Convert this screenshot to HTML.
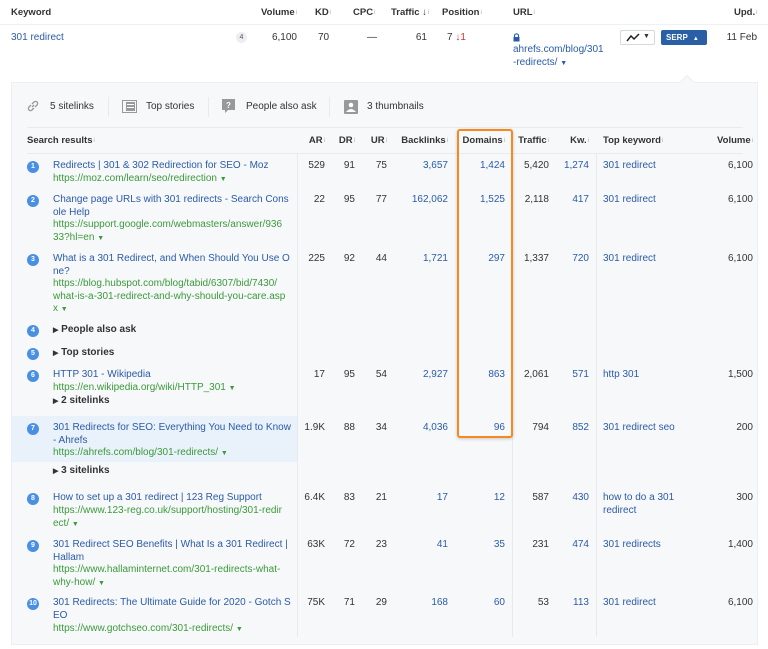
<!DOCTYPE html>
<html><head><meta charset="utf-8">
<style>
*{margin:0;padding:0;box-sizing:border-box}
body{width:768px;height:647px;background:#fff;font-family:"Liberation Sans",Arial,sans-serif;font-size:10px;color:#333;position:relative;overflow:hidden}
.a{position:absolute;white-space:nowrap;line-height:12px}
.r{text-align:right}
.b{font-weight:bold;color:#333}
.l{color:#2a5ba8}
.g{color:#3b9a3b}
.h{font-weight:bold;font-size:9.5px;color:#333}
.i{font-size:6px;color:#aaa;vertical-align:top;font-weight:normal;margin-left:1px}
.n{position:absolute;width:12px;height:12px;border-radius:50%;background:#4a90e2;color:#fff;font-size:7px;font-weight:bold;text-align:center;line-height:12px}
.vl{position:absolute;width:1px;background:#e8eaee}
.tri{font-size:7px}
#w{position:absolute;left:0;top:2px;width:768px;height:647px}
</style></head><body>
<!-- top header -->
<div class="a h" style="left:11px;top:7px">Keyword</div>
<div class="a h r" style="right:471px;top:7px">Volume<span class="i">i</span></div>
<div class="a h" style="left:315px;top:7px">KD<span class="i">i</span></div>
<div class="a h" style="left:353px;top:7px">CPC<span class="i">i</span></div>
<div class="a h" style="left:391px;top:7px">Traffic ↓<span class="i">i</span></div>
<div class="a h" style="left:442px;top:7px">Position<span class="i">i</span></div>
<div class="a h" style="left:513px;top:7px">URL<span class="i">i</span></div>
<div class="a h" style="left:734px;top:7px">Upd.<span class="i">i</span></div>
<div style="position:absolute;left:0;top:24px;width:768px;height:1px;background:#eef0f3"></div>
<div class="a l" style="left:11px;top:32px">301 redirect</div>
<div style="position:absolute;left:236px;top:32px;width:11px;height:11px;border-radius:50%;background:#eceef1;font-size:7px;color:#555;text-align:center;line-height:11px">4</div>
<div class="a r" style="right:471px;top:32px">6,100</div>
<div class="a" style="left:318px;top:32px">70</div>
<div class="a" style="left:367px;top:32px">—</div>
<div class="a r" style="right:341px;top:32px">61</div>
<div class="a" style="left:447px;top:32px">7 <span style="color:#d0342c">↓1</span></div>
<svg style="position:absolute;left:513px;top:33px" width="7" height="9"><path d="M1.5 4 V2.8 a2 2 0 0 1 4 0 V4" stroke="#2a5ba8" stroke-width="1.2" fill="none"/><rect x="0.5" y="4" width="6" height="4.5" fill="#2a5ba8"/></svg>
<div class="a l" style="left:513px;top:44px">ahrefs.com/blog/301</div>
<div class="a l" style="left:513px;top:57px">-redirects/ <span class="tri">▼</span></div>
<div style="position:absolute;left:620px;top:30px;width:35px;height:15px;border:1px solid #d5d8dd;border-radius:2px;background:#fff">
<svg width="14" height="10" style="position:absolute;left:5px;top:2px"><path d="M1 8 L5 3 L8 6 L13 1" stroke="#222" stroke-width="1.5" fill="none"/></svg>
<span style="position:absolute;left:22px;top:2px;font-size:7px">▼</span></div>
<div style="position:absolute;left:661px;top:30px;width:46px;height:15px;background:#2a5fa6;border-radius:2px;color:#fff;font-size:8px;font-weight:bold;line-height:15px;padding-left:5px">SERP <span style="font-size:6px;margin-left:3px">▲</span></div>
<div class="a r" style="right:11px;top:32px">11 Feb</div>
<!-- panel -->
<div style="position:absolute;left:11px;top:82px;width:747px;height:563px;background:#f7f8fa;border:1px solid #eceef1"></div>
<div style="position:absolute;left:682px;top:77px;width:10px;height:10px;background:#f7f8fa;border-left:1px solid #eceef1;border-top:1px solid #eceef1;transform:rotate(45deg)"></div>
<!-- features -->
<svg style="position:absolute;left:26px;top:99px" width="14" height="14"><path d="M6 8 L8 6 M5 6 L3 8 a2 2 0 0 0 3 3 L8 9 M9 8 L11 6 a2 2 0 0 0 -3 -3 L6 5" stroke="#999" stroke-width="1.3" fill="none"/></svg>
<div class="a" style="left:50px;top:101px">5 sitelinks</div>
<div class="vl" style="left:108px;top:97px;height:20px"></div>
<svg style="position:absolute;left:122px;top:100px" width="15" height="13"><rect x="0.5" y="0.5" width="14" height="12" fill="none" stroke="#999"/><rect x="4" y="2" width="9" height="9" fill="#999"/><rect x="5" y="4" width="7" height="1" fill="#fff"/><rect x="5" y="7" width="7" height="1" fill="#fff"/></svg>
<div class="a" style="left:146px;top:101px">Top stories</div>
<div class="vl" style="left:208px;top:97px;height:20px"></div>
<svg style="position:absolute;left:222px;top:99px" width="13" height="15"><path d="M0 0 H13 V11 H6 L3 14 V11 H0 Z" fill="#999"/><text x="6.5" y="9" fill="#fff" font-size="8" font-weight="bold" text-anchor="middle" font-family="Liberation Sans">?</text></svg>
<div class="a" style="left:246px;top:101px">People also ask</div>
<div class="vl" style="left:329px;top:97px;height:20px"></div>
<svg style="position:absolute;left:344px;top:100px" width="14" height="14"><rect width="14" height="14" rx="1" fill="#999"/><circle cx="7" cy="5" r="2.3" fill="#fff"/><path d="M2 12 Q7 6 12 12 Z" fill="#fff"/></svg>
<div class="a" style="left:367px;top:101px">3 thumbnails</div>
<div style="position:absolute;left:27px;top:127px;width:716px;height:1px;background:#e8eaee"></div>
<!-- header row -->
<div class="a h" style="left:27px;top:135px">Search results<span class="i">i</span></div>
<div class="a h r" style="right:443px;top:135px">AR<span class="i">i</span></div>
<div class="a h r" style="right:413px;top:135px">DR<span class="i">i</span></div>
<div class="a h r" style="right:381px;top:135px">UR<span class="i">i</span></div>
<div class="a h r" style="right:320px;top:135px">Backlinks<span class="i">i</span></div>
<div class="a h r" style="right:263px;top:135px">Domains<span class="i">i</span></div>
<div class="a h r" style="right:219px;top:135px">Traffic<span class="i">i</span></div>
<div class="a h r" style="right:179px;top:135px">Kw.<span class="i">i</span></div>
<div class="a h" style="left:603px;top:135px">Top keyword<span class="i">i</span></div>
<div class="a h r" style="right:15px;top:135px">Volume<span class="i">i</span></div>
<div style="position:absolute;left:27px;top:153px;width:716px;height:1px;background:#e8eaee"></div>
<!-- column lines -->
<div class="vl" style="left:297px;top:154px;height:483px"></div>
<div class="vl" style="left:512px;top:154px;height:483px"></div>
<div class="vl" style="left:596px;top:154px;height:483px"></div>
<div id="w">
<!-- highlight row 7 -->
<div style="position:absolute;left:12px;top:414px;width:285px;height:46px;background:#e9f1fa"></div>
<!-- rows -->
<div class="n" style="left:27px;top:159px">1</div>
<div class="a l" style="left:53px;top:158px">Redirects | 301 &amp; 302 Redirection for SEO - Moz</div>
<div class="a g" style="left:53px;top:171px">https://moz.com/learn/seo/redirection <span class="tri">▼</span></div>

<div class="n" style="left:27px;top:193px">2</div>
<div class="a l" style="left:53px;top:192px;line-height:12.5px">Change page URLs with 301 redirects - Search Cons<br>ole Help</div>
<div class="a g" style="left:53px;top:217px;line-height:12.5px">https://support.google.com/webmasters/answer/936<br>33?hl=en <span class="tri">▼</span></div>

<div class="n" style="left:27px;top:252px">3</div>
<div class="a l" style="left:53px;top:251px;line-height:12.5px">What is a 301 Redirect, and When Should You Use O<br>ne?</div>
<div class="a g" style="left:53px;top:276px;line-height:12.5px">https://blog.hubspot.com/blog/tabid/6307/bid/7430/<br>what-is-a-301-redirect-and-why-should-you-care.asp<br>x <span class="tri">▼</span></div>

<div class="n" style="left:27px;top:323px">4</div>
<div class="a b" style="left:53px;top:322px"><span class="tri">▶</span> People also ask</div>
<div class="n" style="left:27px;top:346px">5</div>
<div class="a b" style="left:53px;top:345px"><span class="tri">▶</span> Top stories</div>

<div class="n" style="left:27px;top:368px">6</div>
<div class="a l" style="left:53px;top:367px">HTTP 301 - Wikipedia</div>
<div class="a g" style="left:53px;top:380px">https://en.wikipedia.org/wiki/HTTP_301 <span class="tri">▼</span></div>
<div class="a b" style="left:53px;top:393px"><span class="tri">▶</span> 2 sitelinks</div>

<div class="n" style="left:27px;top:421px">7</div>
<div class="a l" style="left:53px;top:420px;line-height:12.5px">301 Redirects for SEO: Everything You Need to Know<br>- Ahrefs</div>
<div class="a g" style="left:53px;top:445px">https://ahrefs.com/blog/301-redirects/ <span class="tri">▼</span></div>
<div class="a b" style="left:53px;top:463px"><span class="tri">▶</span> 3 sitelinks</div>

<div class="n" style="left:27px;top:491px">8</div>
<div class="a l" style="left:53px;top:490px">How to set up a 301 redirect | 123 Reg Support</div>
<div class="a g" style="left:53px;top:503px;line-height:12.5px">https://www.123-reg.co.uk/support/hosting/301-redir<br>ect/ <span class="tri">▼</span></div>

<div class="n" style="left:27px;top:538px">9</div>
<div class="a l" style="left:53px;top:537px;line-height:12.5px">301 Redirect SEO Benefits | What Is a 301 Redirect |<br>Hallam</div>
<div class="a g" style="left:53px;top:562px;line-height:12.5px">https://www.hallaminternet.com/301-redirects-what-<br>why-how/ <span class="tri">▼</span></div>

<div class="n" style="left:27px;top:596px">10</div>
<div class="a l" style="left:53px;top:595px;line-height:12.5px">301 Redirects: The Ultimate Guide for 2020 - Gotch S<br>EO</div>
<div class="a g" style="left:53px;top:621px">https://www.gotchseo.com/301-redirects/ <span class="tri">▼</span></div>

<!-- numeric cells -->
<div class="a r" style="right:443px;top:158px">529</div><div class="a r" style="right:413px;top:158px">91</div><div class="a r" style="right:381px;top:158px">75</div><div class="a r l" style="right:320px;top:158px">3,657</div><div class="a r l" style="right:263px;top:158px">1,424</div><div class="a r" style="right:219px;top:158px">5,420</div><div class="a r l" style="right:179px;top:158px">1,274</div><div class="a l" style="left:603px;top:158px">301 redirect</div><div class="a r" style="right:15px;top:158px">6,100</div>
<div class="a r" style="right:443px;top:192px">22</div><div class="a r" style="right:413px;top:192px">95</div><div class="a r" style="right:381px;top:192px">77</div><div class="a r l" style="right:320px;top:192px">162,062</div><div class="a r l" style="right:263px;top:192px">1,525</div><div class="a r" style="right:219px;top:192px">2,118</div><div class="a r l" style="right:179px;top:192px">417</div><div class="a l" style="left:603px;top:192px">301 redirect</div><div class="a r" style="right:15px;top:192px">6,100</div>
<div class="a r" style="right:443px;top:251px">225</div><div class="a r" style="right:413px;top:251px">92</div><div class="a r" style="right:381px;top:251px">44</div><div class="a r l" style="right:320px;top:251px">1,721</div><div class="a r l" style="right:263px;top:251px">297</div><div class="a r" style="right:219px;top:251px">1,337</div><div class="a r l" style="right:179px;top:251px">720</div><div class="a l" style="left:603px;top:251px">301 redirect</div><div class="a r" style="right:15px;top:251px">6,100</div>
<div class="a r" style="right:443px;top:367px">17</div><div class="a r" style="right:413px;top:367px">95</div><div class="a r" style="right:381px;top:367px">54</div><div class="a r l" style="right:320px;top:367px">2,927</div><div class="a r l" style="right:263px;top:367px">863</div><div class="a r" style="right:219px;top:367px">2,061</div><div class="a r l" style="right:179px;top:367px">571</div><div class="a l" style="left:603px;top:367px">http 301</div><div class="a r" style="right:15px;top:367px">1,500</div>
<div class="a r" style="right:443px;top:420px">1.9K</div><div class="a r" style="right:413px;top:420px">88</div><div class="a r" style="right:381px;top:420px">34</div><div class="a r l" style="right:320px;top:420px">4,036</div><div class="a r l" style="right:263px;top:420px">96</div><div class="a r" style="right:219px;top:420px">794</div><div class="a r l" style="right:179px;top:420px">852</div><div class="a l" style="left:603px;top:420px">301 redirect seo</div><div class="a r" style="right:15px;top:420px">200</div>
<div class="a r" style="right:443px;top:490px">6.4K</div><div class="a r" style="right:413px;top:490px">83</div><div class="a r" style="right:381px;top:490px">21</div><div class="a r l" style="right:320px;top:490px">17</div><div class="a r l" style="right:263px;top:490px">12</div><div class="a r" style="right:219px;top:490px">587</div><div class="a r l" style="right:179px;top:490px">430</div><div class="a l" style="left:603px;top:490px;line-height:12.5px">how to do a 301<br>redirect</div><div class="a r" style="right:15px;top:490px">300</div>
<div class="a r" style="right:443px;top:537px">63K</div><div class="a r" style="right:413px;top:537px">72</div><div class="a r" style="right:381px;top:537px">23</div><div class="a r l" style="right:320px;top:537px">41</div><div class="a r l" style="right:263px;top:537px">35</div><div class="a r" style="right:219px;top:537px">231</div><div class="a r l" style="right:179px;top:537px">474</div><div class="a l" style="left:603px;top:537px">301 redirects</div><div class="a r" style="right:15px;top:537px">1,400</div>
<div class="a r" style="right:443px;top:595px">75K</div><div class="a r" style="right:413px;top:595px">71</div><div class="a r" style="right:381px;top:595px">29</div><div class="a r l" style="right:320px;top:595px">168</div><div class="a r l" style="right:263px;top:595px">60</div><div class="a r" style="right:219px;top:595px">53</div><div class="a r l" style="right:179px;top:595px">113</div><div class="a l" style="left:603px;top:595px">301 redirect</div><div class="a r" style="right:15px;top:595px">6,100</div>
</div>
<!-- orange highlight -->
<div style="position:absolute;left:457px;top:129px;width:56px;height:309px;border:2.5px solid #f7881f;border-radius:3px;box-shadow:0 1px 3px rgba(0,0,0,.2)"></div>
</body></html>
